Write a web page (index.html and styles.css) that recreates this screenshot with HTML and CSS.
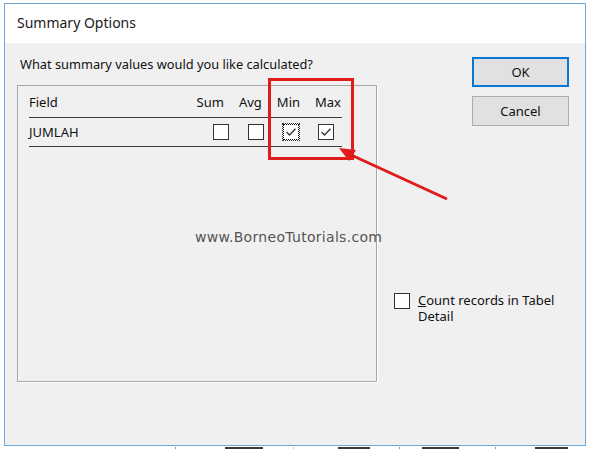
FILE: index.html
```html
<!DOCTYPE html>
<html>
	<head>
		<meta charset="UTF-8">
		<title>Summary Options</title>
		<link rel="stylesheet" href="styles.css">
	</head>
	<body>
		<div class="screen">
			<div class="dialog">
				<div class="titlebar">Summary Options</div>
				<div class="content">
					<div class="main">
						<p class="prompt">What summary values would you like calculated?</p>
						<div class="listbox">
							<div class="list-head">
								<span class="col-field">Field</span>
								<span>Sum</span>
								<span>Avg</span>
								<span>Min</span>
								<span>Max</span>
							</div>
							<div class="list-row">
								<span class="col-field">JUMLAH</span>
								<span class="check"></span>
								<span class="check"></span>
								<span class="check check-focus">
									<svg width="14" height="14" viewBox="0 0 14 14"><path d="M2.5 7 L5.5 10 L11.5 3.8" fill="none" stroke="#333" stroke-width="1.3"/></svg>
								</span>
								<span class="check">
									<svg width="14" height="14" viewBox="0 0 14 14"><path d="M2.5 7 L5.5 10 L11.5 3.8" fill="none" stroke="#333" stroke-width="1.3"/></svg>
								</span>
							</div>
						</div>
					</div>
					<div class="side">
						<button class="btn btn-ok">OK</button>
						<button class="btn">Cancel</button>
						<label class="count">
							<span class="check"></span>
							<span class="count-text">Count records in Tabel Detail</span>
						</label>
					</div>
				</div>
			</div>
			<!-- bit of the window behind the dialog -->
			<div class="behind">
				<span class="vline" style="margin-left:175px"></span>
				<span class="blob" style="margin-left:49px;width:38px"></span>
				<span class="vline gray" style="margin-left:30px"></span>
				<span class="blob" style="margin-left:44px;width:32px"></span>
				<span class="vline" style="margin-left:29px"></span>
				<span class="blob" style="margin-left:22px;width:37px"></span>
				<span class="vline" style="margin-left:36px"></span>
				<span class="blob" style="margin-left:39px;width:33px"></span>
			</div>

			<div class="watermark">www.BorneoTutorials.com</div>

			<svg class="markup" width="590" height="449" viewBox="0 0 590 449">
				<rect x="269.5" y="79.5" width="83" height="79" fill="none" stroke="#e01b1b" stroke-width="3"/>
				<line x1="447" y1="199" x2="349" y2="154" stroke="#e01b1b" stroke-width="3"/>
				<polygon points="339,148 356,150 349,161" fill="#e01b1b"/>
			</svg>
		</div>
	</body>
</html>
```

FILE: styles.css
```css
body{
	margin: 0;
	background: #fff;
	font-family: "Noto Sans", "Liberation Sans", sans-serif;
	color: #111;
}
.screen{
	width: 590px;
	height: 449px;
	position: relative;
	overflow: hidden;
	background: #fff;
}
.dialog{
	margin: 3px 0 0 4px;
	width: 580px;
	height: 441px;
	border: 1px solid #6fa7d8;
	background: #f0f0f0;
	display: flex;
	flex-direction: column;
}
.titlebar{
	height: 39px;
	background: #fff;
	padding-left: 12px;
	font-size: 14px;
	line-height: 38px;
	color: #1a1a1a;
}
.content{
	display: flex;
	gap: 17px;
	padding-left: 12px;
}
.main{
	padding-top: 13px;
}
.prompt{
	margin: 0 0 13px 3px;
	font-size: 12.8px;
	line-height: 16px;
}
.listbox{
	width: 358px;
	height: 295px;
	border: 1px solid #a8a8a8;
	box-shadow: 1px 1px 0 #fff;
	font-size: 13px;
}
.list-head,
.list-row{
	margin-left: 11px;
	display: flex;
	align-items: center;
	border-bottom: 1px solid #3c3c3c;
}
.list-head{
	width: 313px;
	height: 32px;
	gap: 15px;
	padding-right: 1px;
	box-sizing: border-box;
}
.list-row{
	width: 305px;
	height: 28px;
	gap: 19px;
	padding-right: 8px;
}
.col-field{
	margin-right: auto;
}
.check{
	width: 14px;
	height: 14px;
	border: 1px solid #333;
	background: #fff;
	display: flex;
	align-items: center;
	justify-content: center;
	flex-shrink: 0;
}
.check-focus{
	border: 1px dotted #111;
	outline: 1px dotted #333;
}
.side{
	width: 175px;
	padding-top: 14px;
	display: flex;
	flex-direction: column;
	align-items: flex-end;
}
.btn{
	width: 97px;
	height: 30px;
	border: 1px solid #adadad;
	background: #e1e1e1;
	font-family: "Noto Sans", "Liberation Sans", sans-serif;
	font-size: 13px;
	color: #111;
	padding: 0;
}
.btn-ok{
	border: 2px solid #0a77d2;
	margin-bottom: 9px;
}
.count{
	align-self: stretch;
	margin-top: 166px;
	display: flex;
	gap: 8px;
	font-size: 13px;
	line-height: 16px;
}
.count .check{
	margin-top: 1px;
}
/* access key */
.count-text::first-letter{
	text-decoration: underline;
}
.behind{
	height: 3px;
	display: flex;
	margin-top: 1px;
}
.blob{
	height: 3px;
	background: #3a3a3a;
}
.vline{
	width: 1px;
	height: 3px;
	background: #5d9fd8;
}
.vline.gray{
	background: #c8c8c8;
}
.watermark{
	position: absolute;
	left: 195px;
	top: 229px;
	font-family: "DejaVu Sans", sans-serif;
	font-size: 14px;
	letter-spacing: 0.3px;
	color: #555;
}
.markup{
	position: absolute;
	left: 0;
	top: 0;
	pointer-events: none;
}
```
